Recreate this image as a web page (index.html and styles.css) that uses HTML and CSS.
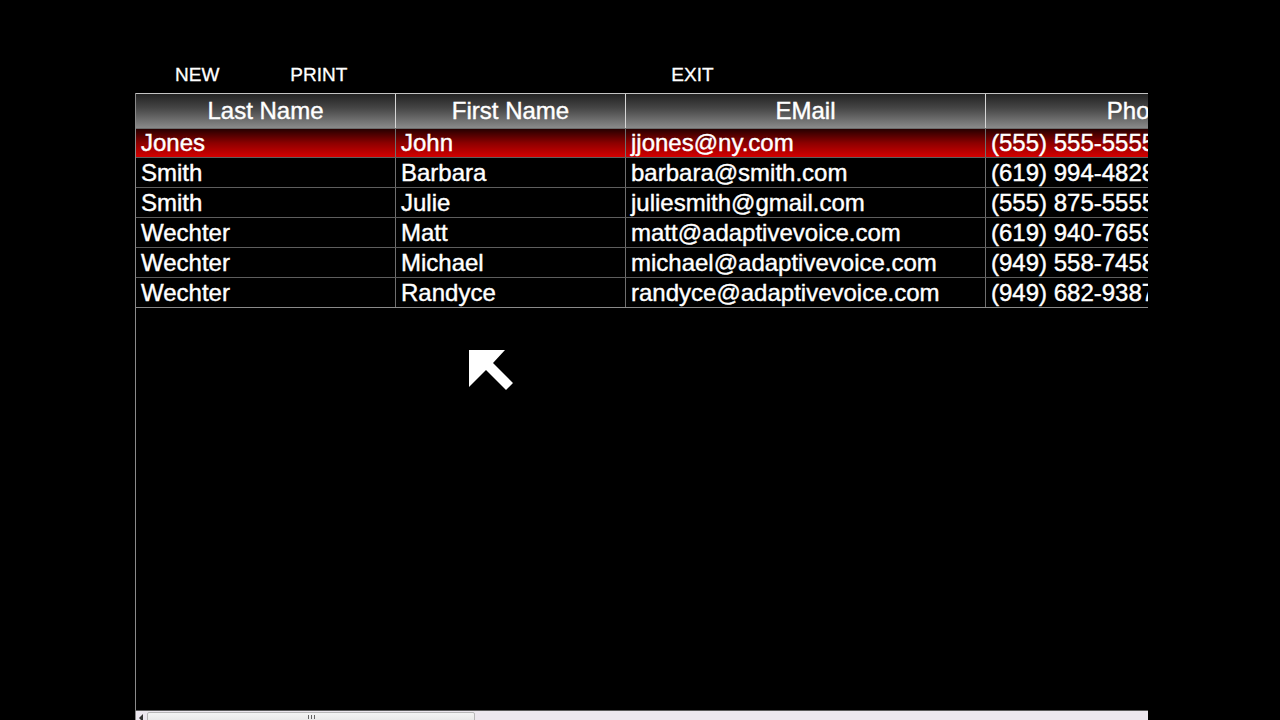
FILE: index.html
```html
<!DOCTYPE html>
<html>
<head>
<meta charset="utf-8">
<link rel="stylesheet" href="styles.css">
</head>
<body>
<div class="app">
  <div class="toolbar">
    <span class="tool tool-new">NEW</span>
    <span class="tool tool-print">PRINT</span>
    <span class="tool tool-exit">EXIT</span>
  </div>
  <div class="grid-wrap">
    <div class="grid">
      <div class="row head">
        <div class="cell c1">Last Name</div>
        <div class="cell c2">First Name</div>
        <div class="cell c3">EMail</div>
        <div class="cell c4">Phone</div>
      </div>
      <div class="row selected">
        <div class="cell c1">Jones</div>
        <div class="cell c2">John</div>
        <div class="cell c3">jjones@ny.com</div>
        <div class="cell c4">(555) 555-5555</div>
      </div>
      <div class="row">
        <div class="cell c1">Smith</div>
        <div class="cell c2">Barbara</div>
        <div class="cell c3">barbara@smith.com</div>
        <div class="cell c4">(619) 994-4828</div>
      </div>
      <div class="row">
        <div class="cell c1">Smith</div>
        <div class="cell c2">Julie</div>
        <div class="cell c3">juliesmith@gmail.com</div>
        <div class="cell c4">(555) 875-5555</div>
      </div>
      <div class="row">
        <div class="cell c1">Wechter</div>
        <div class="cell c2">Matt</div>
        <div class="cell c3">matt@adaptivevoice.com</div>
        <div class="cell c4">(619) 940-7659</div>
      </div>
      <div class="row">
        <div class="cell c1">Wechter</div>
        <div class="cell c2">Michael</div>
        <div class="cell c3">michael@adaptivevoice.com</div>
        <div class="cell c4">(949) 558-7458</div>
      </div>
      <div class="row">
        <div class="cell c1">Wechter</div>
        <div class="cell c2">Randyce</div>
        <div class="cell c3">randyce@adaptivevoice.com</div>
        <div class="cell c4">(949) 682-9387</div>
      </div>
    </div>
  </div>
  <div class="hscroll">
    <div class="sb-btn"><svg width="11" height="11" viewBox="0 0 11 11"><path d="M3 6 L7 2 L7 10 Z" fill="#333"/></svg></div>
    <div class="sb-thumb"><span class="grip"></span></div>
  </div>
</div>
<svg class="cursor" width="46" height="42" viewBox="0 0 46 42">
  <path d="M0 0 L36 0 L24 13 L44 33 L37 40 L17 20 L0 37 Z" fill="#ffffff"/>
</svg>
</body>
</html>
```

FILE: styles.css
```css
html, body {
  margin: 0;
  padding: 0;
  background: #000;
  height: 720px;
  overflow: hidden;
}

body {
  font-family: "Liberation Sans", Arial, sans-serif;
  color: #fff;
  position: relative;
}

.app {
  margin-left: 135px;
  width: 1013px;
  padding-top: 64px;
}

.toolbar {
  display: flex;
  height: 22px;
  line-height: 22px;
  font-size: 19px;
  margin-bottom: 7px;
  -webkit-text-stroke: 0.3px #fff;
}

.tool { white-space: nowrap; }
.tool-new { margin-left: 40px; }
.tool-print { margin-left: 71px; }
.tool-exit { margin-left: 324px; }

.grid-wrap {
  height: 617px;
  overflow: hidden;
  border-left: 1px solid #8a8a8a;
  box-sizing: border-box;
}

.grid {
  width: 1162px;
  font-size: 24px;
  -webkit-text-stroke: 0.4px #fff;
}

.row {
  display: grid;
  grid-template-columns: 260px 230px 360px 312px;
  height: 30px;
  box-sizing: border-box;
  border-bottom: 1px solid #5e5e5e;
}

.cell {
  border-right: 1px solid #6e6e6e;
  padding-left: 5px;
  padding-top: 1px;
  line-height: 28px;
  white-space: nowrap;
  overflow: hidden;
}

.row.head {
  height: 36px;
  border-top: 1px solid #c4c4c4;
  border-bottom: 1px solid #6a6a6a;
  background: linear-gradient(#222, #444 40%, #8a8a8a);
}

.row.head .cell {
  border-right-color: #d6d6d6;
  text-align: center;
  padding-left: 0;
  padding-top: 1px;
  line-height: 32px;
}

.row.selected {
  height: 29px;
  background: linear-gradient(#260000, #8c0000 50%, #d40000);
}

.row.selected .cell {
  padding-top: 0;
}

.row:last-child {
  border-bottom-color: #8a8a8a;
}

.hscroll {
  display: flex;
  height: 17px;
  background: #ece7ee;
  border-top: 1px solid #5a5a5a;
  border-left: 1px solid #8a8a8a;
}

.sb-btn {
  width: 11px;
  display: flex;
  align-items: flex-start;
  justify-content: center;
  padding-top: 1px;
}

.sb-thumb {
  width: 326px;
  height: 15px;
  margin-top: 1px;
  border: 1px solid #b8b8b8;
  border-radius: 2px;
  background: linear-gradient(#f4f4f4, #dcdcdc);
  display: flex;
  justify-content: center;
}

.grip {
  width: 5px;
  height: 4px;
  margin-top: 2px;
  border-left: 1px solid #666;
  border-right: 1px solid #666;
  position: relative;
}

.grip::after {
  content: "";
  position: absolute;
  left: 2px;
  top: 0;
  width: 1px;
  height: 4px;
  background: #666;
}

.cursor {
  position: absolute;
  left: 469px;
  top: 350px;
}
```
